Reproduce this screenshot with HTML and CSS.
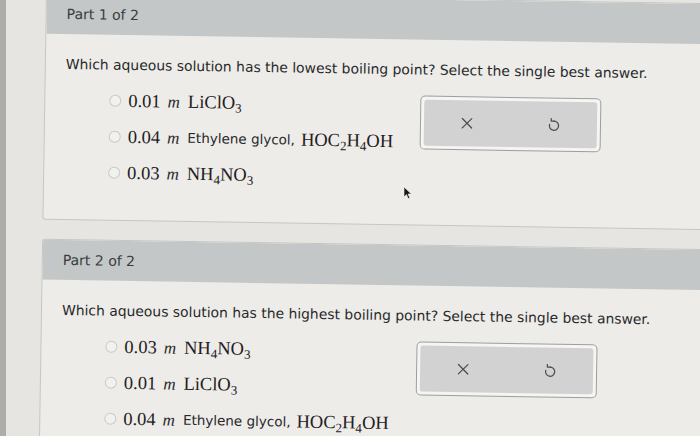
FILE: index.html
```html
<!DOCTYPE html>
<html>
<head>
<meta charset="utf-8">
<link rel="stylesheet" href="styles.css">
</head>
<body>
<div class="page">
  <section class="card">
    <div class="card-head">Part 1 of 2</div>
    <div class="card-body">
      <p class="question">Which aqueous solution has the lowest boiling point? Select the single best answer.</p>
      <div class="answer-row">
        <div class="options">
          <label class="opt"><span class="radio"></span><span class="chem">0.01<i class="mol">m</i>LiClO<sub>3</sub></span></label>
          <label class="opt"><span class="radio"></span><span class="chem">0.04<i class="mol">m</i></span><span class="word">Ethylene glycol,</span><span class="chem">HOC<sub>2</sub>H<sub>4</sub>OH</span></label>
          <label class="opt"><span class="radio"></span><span class="chem">0.03<i class="mol">m</i>NH<sub>4</sub>NO<sub>3</sub></span></label>
        </div>
        <div class="tools">
          <div class="tools-inner">
            <span class="tool">
              <svg width="14" height="14" viewBox="0 0 14 14"><path d="M2.3 2.3 L11.7 11.7 M11.7 2.3 L2.3 11.7" stroke="#4d4f52" stroke-width="1.3" fill="none" stroke-linecap="round"/></svg>
            </span>
            <span class="tool">
              <svg width="14" height="16" viewBox="0 0 14 16"><path d="M7 4.5 A4.6 4.6 0 1 1 2.6 7.8" stroke="#4d4f52" stroke-width="1.3" fill="none" stroke-linecap="round"/><path d="M4.2 2 L4.2 4.5 L7.4 4.5" stroke="#4d4f52" stroke-width="1.3" fill="none" stroke-linecap="round" stroke-linejoin="round"/></svg>
            </span>
          </div>
        </div>
      </div>
    </div>
  </section>

  <section class="card card-two">
    <div class="card-head">Part 2 of 2</div>
    <div class="card-body">
      <p class="question">Which aqueous solution has the highest boiling point? Select the single best answer.</p>
      <div class="answer-row">
        <div class="options">
          <label class="opt"><span class="radio"></span><span class="chem">0.03<i class="mol">m</i>NH<sub>4</sub>NO<sub>3</sub></span></label>
          <label class="opt"><span class="radio"></span><span class="chem">0.01<i class="mol">m</i>LiClO<sub>3</sub></span></label>
          <label class="opt"><span class="radio"></span><span class="chem">0.04<i class="mol">m</i></span><span class="word">Ethylene glycol,</span><span class="chem">HOC<sub>2</sub>H<sub>4</sub>OH</span></label>
        </div>
        <div class="tools">
          <div class="tools-inner">
            <span class="tool">
              <svg width="14" height="14" viewBox="0 0 14 14"><path d="M2.3 2.3 L11.7 11.7 M11.7 2.3 L2.3 11.7" stroke="#4d4f52" stroke-width="1.3" fill="none" stroke-linecap="round"/></svg>
            </span>
            <span class="tool">
              <svg width="14" height="16" viewBox="0 0 14 16"><path d="M7 4.5 A4.6 4.6 0 1 1 2.6 7.8" stroke="#4d4f52" stroke-width="1.3" fill="none" stroke-linecap="round"/><path d="M4.2 2 L4.2 4.5 L7.4 4.5" stroke="#4d4f52" stroke-width="1.3" fill="none" stroke-linecap="round" stroke-linejoin="round"/></svg>
            </span>
          </div>
        </div>
      </div>
    </div>
  </section>
</div>
<svg class="cursor" width="10" height="14" viewBox="0 0 10 14"><path d="M1 1 L1 11 L3.4 8.6 L5.2 12.6 L6.8 11.9 L5 8 L8.4 8 Z" fill="#1a1a1a" stroke="#f2f2f2" stroke-width="0.6"/></svg>
</body>
</html>
```

FILE: styles.css
```css
html, body {
  margin: 0;
  height: 100%;
}
body {
  background: #e6e5e2;
  border-left: 6px solid #adaeac;
  overflow: hidden;
  font-family: "DejaVu Sans", "Liberation Sans", sans-serif;
  color: #2e2f31;
  position: relative;
}
.page {
  transform: rotate(0.9deg);
  transform-origin: 0 0;
  margin-top: -8px;
  padding-left: 40px;
  width: 760px;
}
.card {
  background: #edece9;
  border: 1px solid #c6c6c3;
  border-radius: 3px;
  overflow: hidden;
}
.card-two {
  margin-top: 19px;
}
.card-head {
  height: 40px;
  box-sizing: border-box;
  padding: 0 0 0 20px;
  display: flex;
  align-items: center;
  background: #c3c7c7;
  font-size: 14px;
  color: #3a3b3d;
}
.card-body {
  padding: 20px 0 29px 20px;
}
.question {
  margin: 0;
  font-size: 13.9px;
  line-height: 20px;
  color: #27282a;
}
.answer-row {
  display: grid;
  grid-template-columns: 355px 181px;
  margin-top: 8px;
}
.options {
  display: flex;
  flex-direction: column;
  padding-left: 44px;
}
.opt {
  height: 36px;
  display: flex;
  align-items: center;
  white-space: nowrap;
}
.radio {
  width: 10px;
  height: 10px;
  border: 1px solid #c9cac8;
  border-radius: 50%;
  background: #f1f1ef;
  margin-right: 7px;
  flex: none;
}
.chem {
  font-family: "Liberation Serif", "DejaVu Serif", serif;
  font-size: 18.5px;
  color: #1f2022;
}
.chem sub {
  font-size: 13px;
  vertical-align: -4px;
  line-height: 0;
}
.mol {
  margin: 0 8px 0 7px;
  font-size: 17px;
  color: #2a2a2c;
}
.word {
  font-size: 13.5px;
  margin-right: 6px;
  color: #27282a;
}
.tools {
  margin-top: 8px;
  height: 54px;
  box-sizing: border-box;
  border: 1px solid #9d9e9d;
  border-radius: 5px;
  background: #f5f5f3;
  padding: 3px;
}
.tools-inner {
  height: 100%;
  background: #d1d2d1;
  border-radius: 3px;
  display: flex;
}
.tool {
  flex: 1;
  display: flex;
  align-items: center;
  justify-content: center;
}
.cursor {
  position: absolute;
  left: 397px;
  top: 186px;
}
```
